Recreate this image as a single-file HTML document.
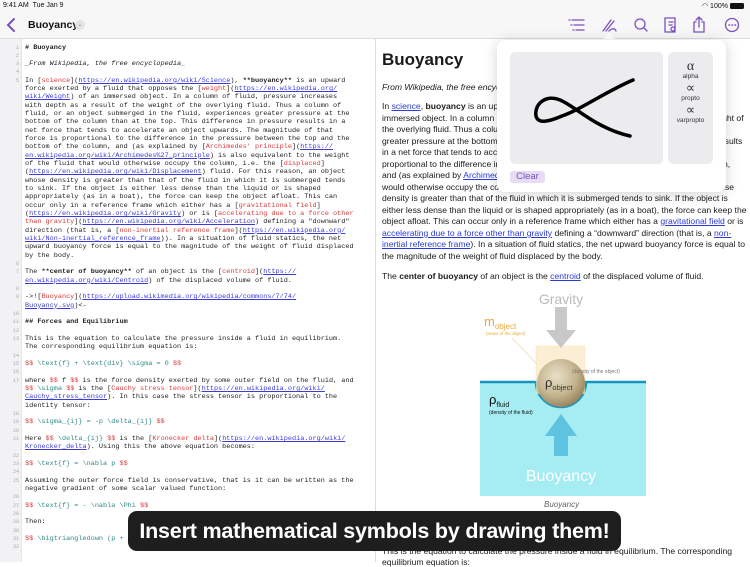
<!DOCTYPE html>
<html><head><meta charset="utf-8"><style>
*{margin:0;padding:0;box-sizing:border-box}
body{width:750px;height:562px;overflow:hidden;background:#fff;font-family:"Liberation Sans",sans-serif;position:relative;color:#111}
.abs{position:absolute}
#top{position:absolute;left:0;top:0;width:750px;height:39px;background:#f7f7f8;border-bottom:1px solid #dcdcdc}
#gut{position:absolute;left:0;top:39px;width:22px;height:523px;background:#f2f2f4;border-right:1px solid #e6e6e6}
#code{position:absolute;left:25px;top:43.5px;font-family:"Liberation Mono",monospace;font-size:6.85px;line-height:8.33px;white-space:pre;color:#222}
#nums{position:absolute;left:0;top:43.5px;width:19px;text-align:right;font-family:"Liberation Mono",monospace;font-size:5px;line-height:8.33px;color:#aaa;white-space:pre}
.r{color:#d93a3a}.u{color:#3b3bd6;text-decoration:underline}.b{font-weight:bold}.g{color:#2f8a86}.i{font-style:italic}
#sep{position:absolute;left:375px;top:39px;width:1px;height:523px;background:#ddd}
#right{position:absolute;left:382px;top:0;font-size:8.6px;color:#1a1a1a;white-space:nowrap}
#right div{position:absolute;left:0}
.l{color:#2b3bd8;text-decoration:underline}
#pop{position:absolute;left:497px;top:40px;width:229px;height:152px;background:#fff;border-radius:8px;box-shadow:0 2px 14px rgba(0,0,0,.18)}
#toast{position:absolute;left:128px;top:511px;width:493px;height:40px;background:#1e1e1e;border-radius:9px;color:#fff;font-size:21.5px;font-weight:bold;text-align:center;line-height:40px;letter-spacing:-.2px}
</style></head><body>
<div id="top">
<div class="abs" style="left:3px;top:2px;font-size:7px;color:#111">9:41 AM&nbsp;&nbsp;Tue Jan 9</div>
<div class="abs" style="left:702px;top:2px;font-size:7px;color:#111">&#x25E0; 100%</div>
<div class="abs" style="left:730px;top:3px;width:14px;height:6px;background:#111;border-radius:1.5px"></div>
<svg class="abs" style="left:5px;top:17px" width="12" height="16"><path d="M9 2 L3 8 L9 14" stroke="#7b4fc0" stroke-width="2" fill="none" stroke-linecap="round"/></svg>
<div class="abs" style="left:28px;top:19px;font-size:10.5px;font-weight:bold">Buoyancy</div>
<div class="abs" style="left:75px;top:20px;width:10px;height:10px;border-radius:5px;background:#e4e4e6;font-size:6px;color:#888;text-align:center;line-height:10px">&#x2304;</div>
<svg class="abs" style="left:565px;top:14px" width="180" height="22" fill="none" stroke="#7b4fc0" stroke-width="1.3" stroke-linecap="round">
<path d="M7 6h12M9 11h10M11 16h8M4 6h1M6 11h1M8 16h1"/>
<path d="M38 17 L46 6 M41 17 L49 7 M44 17 C47 14 50 14 51 17"/>
<circle cx="75" cy="10" r="5"/><path d="M79 14 L82 17"/>
<path d="M102 4h8v14h-10v-14z M104 8h4M104 11h3"/><circle cx="108" cy="15" r="2"/>
<path d="M131 8h-2v10h10v-10h-2M134 13v-10M131 6l3-3l3 3"/>
<circle cx="167" cy="11" r="6.5"/><path d="M164 11h0.5M167 11h0.5M170 11h0.5" stroke-width="1.6"/>
</svg>
<svg class="abs" style="left:602px;top:33px" width="14" height="7"><path d="M0 7 L7 0 L14 7z" fill="#fff"/></svg>
</div>
<div id="gut"></div>
<div id="nums"></div>
<div id="code"><span class="b"># Buoyancy</span>

<span class="i">_From Wikipedia, the free encyclopedia_</span>

In [<span class="r">science</span>](<span class="u">https://en.wikipedia.org/wiki/Science</span>), <span class="b">**buoyancy**</span> is an upward
force exerted by a fluid that opposes the [<span class="r">weight</span>](<span class="u">https://en.wikipedia.org/</span>
<span class="u">wiki/Weight</span>) of an immersed object. In a column of fluid, pressure increases
with depth as a result of the weight of the overlying fluid. Thus a column of
fluid, or an object submerged in the fluid, experiences greater pressure at the
bottom of the column than at the top. This difference in pressure results in a
net force that tends to accelerate an object upwards. The magnitude of that
force is proportional to the difference in the pressure between the top and the
bottom of the column, and (as explained by [<span class="r">Archimedes' principle</span>](<span class="u">https://</span>
<span class="u">en.wikipedia.org/wiki/Archimedes%27_principle</span>) is also equivalent to the weight
of the fluid that would otherwise occupy the column, i.e. the [<span class="r">displaced</span>]
(<span class="u">https://en.wikipedia.org/wiki/Displacement</span>) fluid. For this reason, an object
whose density is greater than that of the fluid in which it is submerged tends
to sink. If the object is either less dense than the liquid or is shaped
appropriately (as in a boat), the force can keep the object afloat. This can
occur only in a reference frame which either has a [<span class="r">gravitational field</span>]
(<span class="u">https://en.wikipedia.org/wiki/Gravity</span>) or is [<span class="r">accelerating due to a force other</span>
<span class="r">than gravity</span>](<span class="u">https://en.wikipedia.org/wiki/Acceleration</span>) defining a "downward"
direction (that is, a [<span class="r">non-inertial reference frame</span>](<span class="u">https://en.wikipedia.org/</span>
<span class="u">wiki/Non-inertial_reference_frame</span>)). In a situation of fluid statics, the net
upward buoyancy force is equal to the magnitude of the weight of fluid displaced
by the body.

The <span class="b">**center of buoyancy**</span> of an object is the [<span class="r">centroid</span>](<span class="u">https://</span>
<span class="u">en.wikipedia.org/wiki/Centroid</span>) of the displaced volume of fluid.

->![<span class="r">Buoyancy</span>](<span class="u">https://upload.wikimedia.org/wikipedia/commons/7/74/</span>
<span class="u">Buoyancy.svg</span>)<-

<span class="b">## Forces and Equilibrium</span>

This is the equation to calculate the pressure inside a fluid in equilibrium.
The corresponding equilibrium equation is:

<span class="r">$$</span> <span class="g">\text{f} + \text{div} \sigma = 0</span> <span class="r">$$</span>

where <span class="r">$$</span> f <span class="r">$$</span> is the force density exerted by some outer field on the fluid, and
<span class="r">$$</span> <span class="g">\sigma</span> <span class="r">$$</span> is the [<span class="r">Cauchy stress tensor</span>](<span class="u">https://en.wikipedia.org/wiki/</span>
<span class="u">Cauchy_stress_tensor</span>). In this case the stress tensor is proportional to the
identity tensor:

<span class="r">$$</span> <span class="g">\sigma_{ij} = -p \delta_{ij}</span> <span class="r">$$</span>

Here <span class="r">$$</span> <span class="g">\delta_{ij}</span> <span class="r">$$</span> is the [<span class="r">Kronecker delta</span>](<span class="u">https://en.wikipedia.org/wiki/</span>
<span class="u">Kronecker_delta</span>). Using this the above equation becomes:

<span class="r">$$</span> <span class="g">\text{f} = \nabla p</span> <span class="r">$$</span>

Assuming the outer force field is conservative, that is it can be written as the
negative gradient of some scalar valued function:

<span class="r">$$</span> <span class="g">\text{f} = - \nabla \Phi</span> <span class="r">$$</span>

Then:

<span class="r">$$</span> <span class="g">\bigtriangledown (p + \Phi) = 0</span> <span class="r">$$</span>
</div>
<div id="sep"></div>
<div id="right">
<div style="top:50px;font-size:17px;font-weight:bold">Buoyancy</div>
<div style="top:82px;font-style:italic">From Wikipedia, the free encyclopedia</div>
<div style="top:101px">In <span class="l">science</span>, <b>buoyancy</b> is an upward force exerted by a fluid that opposes the weight of an</div>
<div style="top:113px">immersed object. In a column of fluid, pressure increases with depth as a result of the weight of</div>
<div style="top:124px">the overlying fluid. Thus a column of fluid, or an object submerged in the fluid, experiences</div>
<div style="top:136px">greater pressure at the bottom of the column than at the top. This difference in pressure results</div>
<div style="top:147px">in a net force that tends to accelerate an object upwards. The magnitude of that force is</div>
<div style="top:159px">proportional to the difference in the pressure between the top and the bottom of the column,</div>
<div style="top:170px">and (as explained by <span class="l">Archimedes' principle</span>) is also equivalent to the weight of the fluid that</div>
<div style="top:182px">would otherwise occupy the column, i.e. the displaced fluid. For this reason, an object whose</div>
<div style="top:193px">density is greater than that of the fluid in which it is submerged tends to sink. If the object is</div>
<div style="top:205px">either less dense than the liquid or is shaped appropriately (as in a boat), the force can keep the</div>
<div style="top:216px">object afloat. This can occur only in a reference frame which either has a <span class="l">gravitational field</span> or is</div>
<div style="top:228px"><span class="l">accelerating due to a force other than gravity</span> defining a “downward” direction (that is, a <span class="l">non-</span></div>
<div style="top:239px"><span class="l">inertial reference frame</span>). In a situation of fluid statics, the net upward buoyancy force is equal to</div>
<div style="top:251px">the magnitude of the weight of fluid displaced by the body.</div>
<div style="top:271px">The <b>center of buoyancy</b> of an object is the <span class="l">centroid</span> of the displaced volume of fluid.</div>
<div style="top:500px;left:162px;font-style:italic;font-size:8px;color:#666">Buoyancy</div>
<div style="top:546px">This is the equation to calculate the pressure inside a fluid in equilibrium. The corresponding</div>
<div style="top:557px">equilibrium equation is:</div>
</div>
<svg class="abs" style="left:480px;top:288px" width="166" height="210">
<defs><radialGradient id="bg" cx="0.4" cy="0.35" r="0.7"><stop offset="0" stop-color="#e9e0c8"/><stop offset="0.6" stop-color="#c4b48e"/><stop offset="1" stop-color="#8f7d57"/></radialGradient></defs>
<path d="M0 94 H56 A25 25 0 0 0 106 94 H166 V208 H0 Z" fill="#a6ecf3"/>
<path d="M0 94 H56 A25 25 0 0 0 106 94 H166" stroke="#1596bd" stroke-width="2.5" fill="none"/>
<rect x="56" y="58" width="49" height="48" fill="#fbe7c2" opacity=".7" stroke="#f0c070" stroke-dasharray="1 1" stroke-width=".5"/>
<line x1="32" y1="50" x2="57" y2="76" stroke="#e8b050" stroke-width=".5"/>
<circle cx="81" cy="95" r="24" fill="url(#bg)"/>
<text x="81" y="16" text-anchor="middle" font-size="14" fill="#bbb" font-family="Liberation Sans">Gravity</text>
<path d="M75 19 H87 V42 H96 L81 60 L66 42 H75 Z" fill="#c8c8c8"/>
<path d="M74 168 H88 V148 H97 L81 126 L65 148 H74 Z" fill="#5ec3e0"/>
<text x="81" y="193" text-anchor="middle" font-size="16" fill="#fff" font-family="Liberation Sans">Buoyancy</text>
<text x="4" y="38" font-size="13" fill="#e9a93c" font-family="Liberation Sans">m<tspan font-size="8" dy="3">object</tspan></text>
<text x="6" y="47" font-size="4.5" fill="#e9a93c" font-family="Liberation Sans">(mass of the object)</text>
<text x="65" y="99" font-size="13" fill="#333" font-family="Liberation Sans">ρ<tspan font-size="7.5" dy="3">object</tspan></text>
<text x="92" y="85" font-size="5" fill="#777" font-family="Liberation Sans">(density of the object)</text>
<text x="9" y="116" font-size="13" fill="#111" font-family="Liberation Sans">ρ<tspan font-size="7" dy="3">fluid</tspan></text>
<text x="9" y="126" font-size="5" fill="#111" font-family="Liberation Sans">(density of the fluid)</text>
</svg>
<div id="pop">
<div class="abs" style="left:13px;top:12px;width:153px;height:112px;background:#ececef;border-radius:5px"></div>
<svg class="abs" style="left:13px;top:12px" width="153" height="112"><path d="M123 28 C95 40 70 58 52 64 C38 70 28 72 26 64 C24 52 36 42 50 48 C65 54 85 76 120 84" stroke="#000" stroke-width="3.5" fill="none" stroke-linecap="round"/></svg>
<div class="abs" style="left:171px;top:12px;width:45px;height:112px;background:#ececef;border-radius:5px;text-align:center;font-size:6.5px;color:#333;line-height:8px">
<div style="font-family:'Liberation Serif',serif;font-size:14px;margin-top:9px;line-height:12px">α</div><div>alpha</div>
<div style="font-family:'DejaVu Sans',serif;font-size:13px;margin-top:2px;line-height:12px">∝</div><div>propto</div>
<div style="font-family:'DejaVu Sans',serif;font-size:13px;margin-top:2px;line-height:12px">∝</div><div>varpropto</div>
</div>
<div class="abs" style="left:13px;top:131px;width:35px;height:12px;background:#e6dcf4;border-radius:3px;color:#7b4fc0;font-size:9.5px;text-align:center;line-height:12px">Clear</div>
</div>
<div id="toast">Insert mathematical symbols by drawing them!</div>
<script>
(function(){var seq=[[1,1],[2,1],[3,1],[4,1],[5,22],[6,1],[7,2],[8,1],[9,2],[10,1],[11,1],[12,1],[13,2],[14,1],[15,1],[16,1],[17,4],[18,1],[19,1],[20,1],[21,2],[22,1],[23,1],[24,1],[25,2],[26,1],[27,1],[28,1],[29,1],[30,1],[31,1],[32,1]];var s=[];seq.forEach(function(p){s.push(p[0]);for(var i=1;i<p[1];i++)s.push('');});document.getElementById('nums').textContent=s.join('\n');})();
</script>
</body></html>
